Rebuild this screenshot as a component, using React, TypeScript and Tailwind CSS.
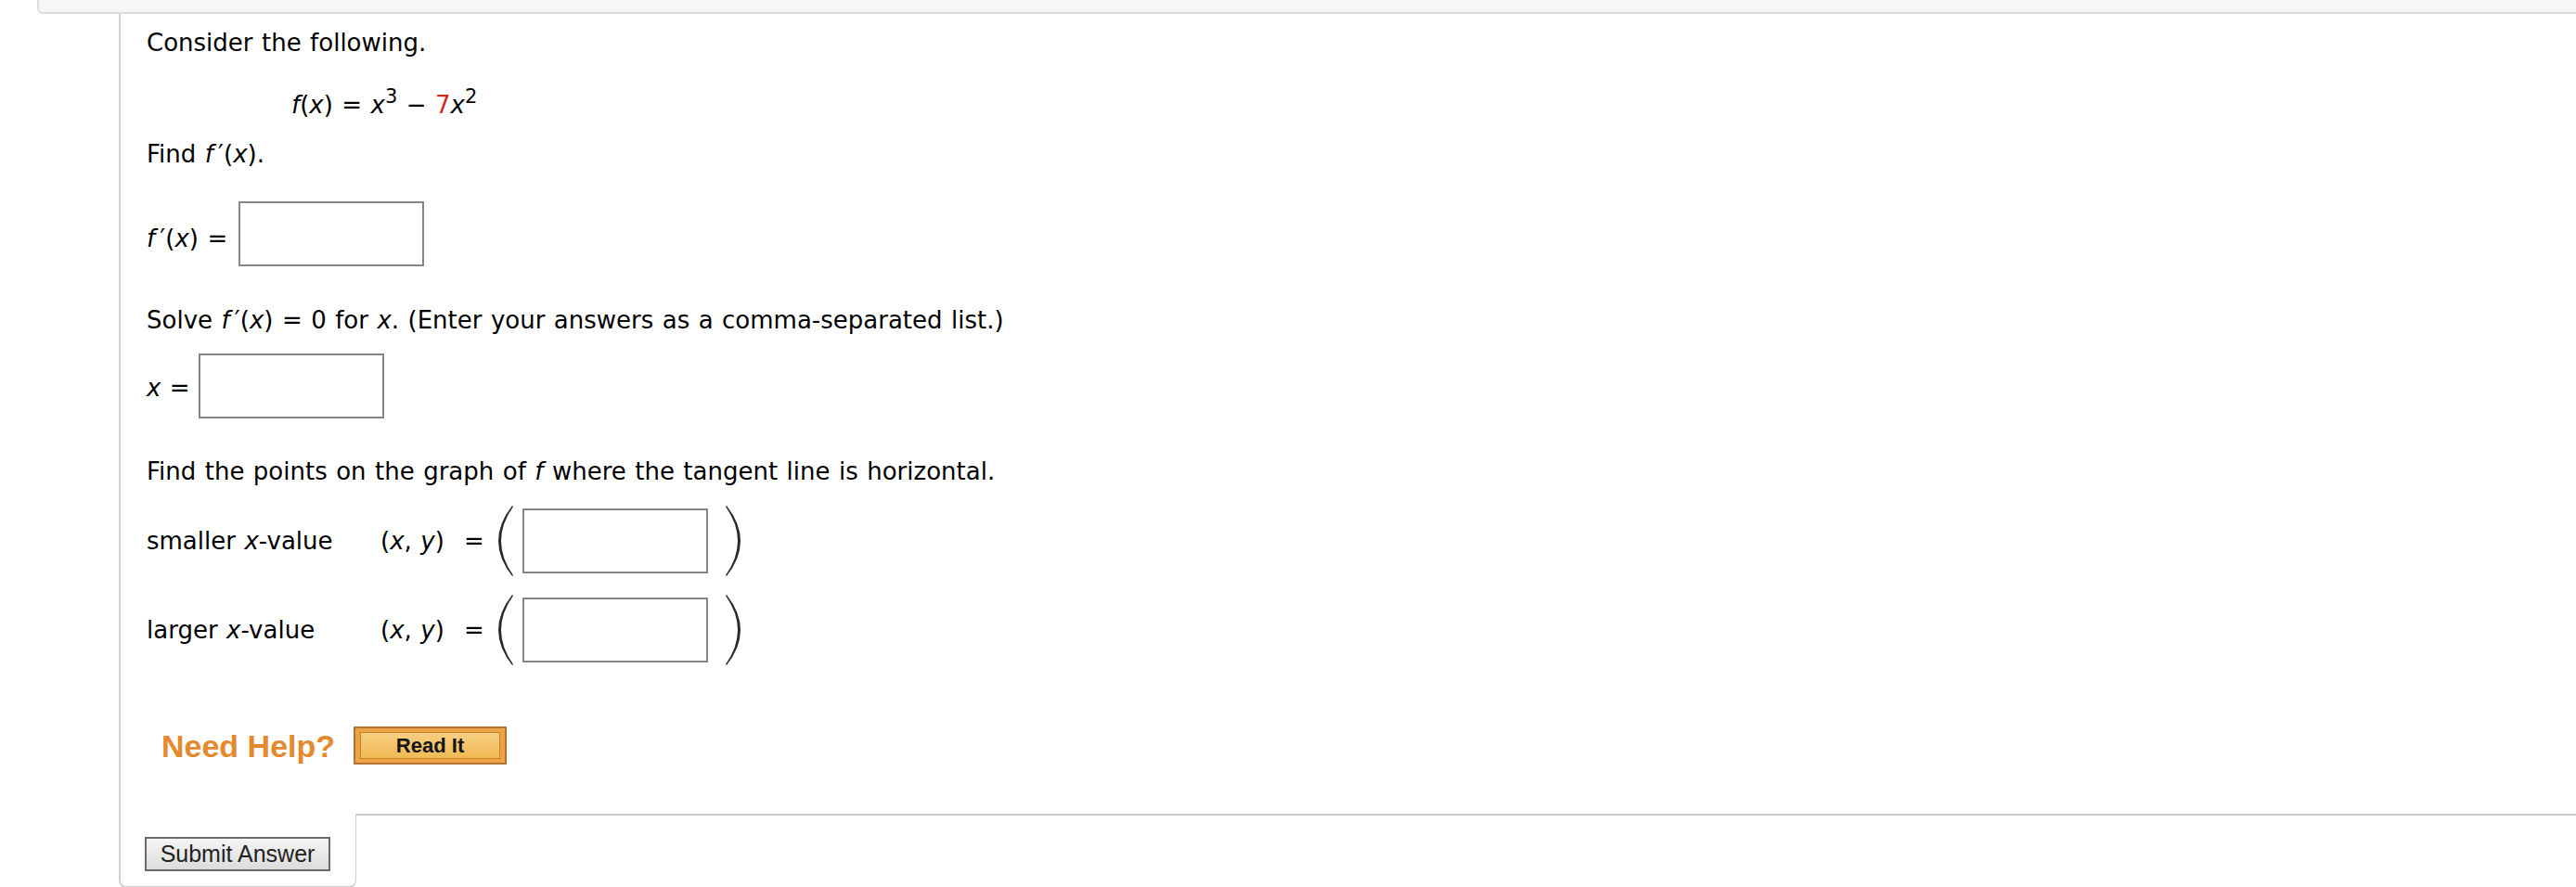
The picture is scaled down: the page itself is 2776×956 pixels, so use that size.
import React from 'react';

function Paren({ side }: { side: 'left' | 'right' }) {
    const d =
        side === 'left'
            ? 'M15 0 Q-15 38 15 76 L16 75 Q-10 38 16 1 Z'
            : 'M1 0 Q31 38 1 76 L0 75 Q26 38 0 1 Z';
    return (
        <svg width="16" height="76" viewBox="0 0 16 76" className="shrink-0">
            <path d={d} fill="#2a2a2a" />
        </svg>
    );
}

function AnswerBox({ width = 'w-[200px]' }: { width?: string }) {
    return <div className={`${width} h-[70px] shrink-0 border-2 border-[#858585] bg-white`} />;
}

function PointRow({ label }: { label: string }) {
    return (
        <div className="flex items-center">
            <span className="w-[252px] shrink-0">
                {label} <i>x</i>-value
            </span>
            <span className="w-[90px] shrink-0">
                (<i>x</i>, <i>y</i>)
            </span>
            <span className="w-[22px] shrink-0 text-center">=</span>
            <div className="ml-[15px] flex items-center">
                <Paren side="left" />
                <div className="ml-[10px]">
                    <AnswerBox />
                </div>
                <div className="ml-[19px]">
                    <Paren side="right" />
                </div>
            </div>
        </div>
    );
}

export default function App() {
    return (
        <div className="w-[2776px] h-[956px] overflow-hidden bg-white font-['DejaVu_Sans',Verdana,sans-serif] text-[26px] leading-[30px] [word-spacing:1.2px] text-black">
            {/* top strip */}
            <div className="ml-[40px] h-[15px] rounded-bl-[6px] border-b-2 border-l-2 border-[#dcdcdc] bg-[#f6f6f6]" />

            {/* question body */}
            <div className="ml-[128px] border-l-2 border-[#d0d0d0] pl-[28px] pt-[16px] pb-[53px]">
                <p>Consider the following.</p>

                <p className="mt-[37px] pl-[156px]">
                    <i>f</i>(<i>x</i>) = <i>x</i>
                    <sup className="relative -top-[11px] align-baseline text-[21px] leading-none">3</sup> −{' '}
                    <span className="text-[#d3291c]">7</span>
                    <i>x</i>
                    <sup className="relative -top-[11px] align-baseline text-[21px] leading-none">2</sup>
                </p>

                <p className="mt-[23px]">
                    Find <i>f</i>&thinsp;′(<i>x</i>).
                </p>

                <div className="mt-[36px] flex items-center">
                    <span className="w-[99px] shrink-0 pt-[10px]">
                        <i>f</i>&thinsp;′(<i>x</i>) =
                    </span>
                    <AnswerBox />
                </div>

                <p className="mt-[43px]">
                    Solve <i>f</i>&thinsp;′(<i>x</i>) = 0 for <i>x</i>. (Enter your answers as a comma-separated list.)
                </p>

                <div className="mt-[21px] flex items-center">
                    <span className="w-[56px] shrink-0 pt-[4px]">
                        <i>x</i> =
                    </span>
                    <AnswerBox />
                </div>

                <p className="mt-[42px]">
                    Find the points on the graph of <i>f</i> where the tangent line is horizontal.
                </p>

                <div className="mt-[22px]">
                    <PointRow label="smaller" />
                </div>
                <div className="mt-[20px]">
                    <PointRow label="larger" />
                </div>

                {/* help */}
                <div className="mt-[66px] ml-[16px] flex items-center gap-[20px] [word-spacing:0px]">
                    <span className="font-['Liberation_Sans',Arial,sans-serif] text-[34px] font-bold leading-none text-[#e4892e]">
                        Need Help?
                    </span>
                    <button className="flex h-[41px] w-[165px] items-center justify-center border-2 border-[#b07536] bg-[#eda243] px-[5px] py-[4px]">
                        <span className="flex h-full w-full items-center justify-center border border-[#c4822f] bg-gradient-to-b from-[#f6cf80] to-[#f1b954] font-['Liberation_Sans',Arial,sans-serif] text-[22px] font-bold leading-none text-[#141414]">
                            Read It
                        </span>
                    </button>
                </div>
            </div>

            {/* footer */}
            <div className="ml-[128px] flex h-[80px] [word-spacing:0px]">
                <div className="w-[256px] shrink-0 rounded-b-[8px] border-b-2 border-l-2 border-r border-[#d0d0d0] pl-[26px] pt-[25px]">
                    <button className="h-[37px] w-[200px] border-2 border-[#6a6a6a] bg-gradient-to-b from-[#f5f5f5] to-[#dcdcdc] font-['Liberation_Sans',Arial,sans-serif] text-[25px] leading-none text-[#222]">
                        Submit Answer
                    </button>
                </div>
                <div className="flex-1 border-t-2 border-[#cccccc]" />
            </div>
        </div>
    );
}
